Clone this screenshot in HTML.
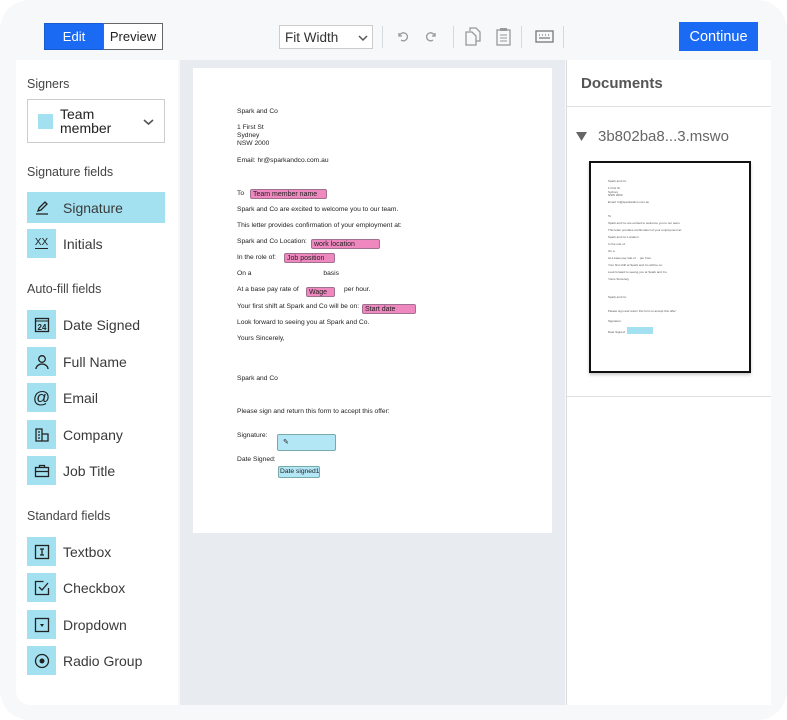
<!DOCTYPE html>
<html><head><style>
*{box-sizing:border-box;margin:0;padding:0}
body{width:787px;height:720px;background:#fff;font-family:"Liberation Sans",sans-serif;position:relative;overflow:hidden}
.card{position:absolute;left:0;top:0;width:787px;height:720px;background:#f7f8fa;border-radius:30px}
.abs{position:absolute}
.btn{position:absolute;font-size:13px;display:flex;align-items:center;justify-content:center}
.vd{position:absolute;top:26px;width:1px;height:22px;background:#d5d8dc}
.left{position:absolute;left:16px;top:60px;width:162px;height:645px;background:#fff;border-bottom-left-radius:14px}
.lab{position:absolute;left:27px;font-size:12.5px;color:#444}
.row{position:absolute;left:27px;height:29px;display:flex;align-items:center;font-size:14px;color:#3a3a3a}
.ic{width:29px;height:29px;background:#a3e1f1;display:flex;align-items:center;justify-content:center;margin-right:7px}
.center{position:absolute;left:180px;top:60px;width:385px;height:645px;background:#e8ebef}
.page{position:absolute;left:193px;top:68px;width:359px;height:465px;background:#fff}
.t{position:absolute;left:237px;font-size:6.7px;color:#222;white-space:nowrap}
.f{position:absolute;height:10px;background:#f088c0;border:1px solid #a07090;border-radius:2px;font-size:7px;color:#222;line-height:9px;padding-left:2px;white-space:nowrap;overflow:hidden}
.right{position:absolute;left:566px;top:60px;width:205px;height:645px;background:#fff;border-left:1px solid #ddd}
.th{position:absolute;font-size:3px;color:#555;white-space:nowrap}
</style></head><body>
<div class="card"></div>
<div class="btn" style="left:44px;top:23px;width:60px;height:27px;background:#1a6af3;color:#fff;border:1px solid #1a5ad0">Edit</div>
<div class="btn" style="left:103px;top:23px;width:60px;height:27px;background:#fff;color:#222;border:1px solid #666">Preview</div>
<div class="btn" style="left:279px;top:25px;width:94px;height:24px;background:#fff;border:1px solid #ccc;justify-content:flex-start;padding-left:5px;font-size:13.5px;color:#333">Fit Width<svg class="abs" style="left:78px;top:8px" width="10" height="8" viewBox="0 0 10 8"><path d="M1 2l4 4 4-4" stroke="#555" stroke-width="1.5" fill="none"/></svg></div>
<div class="vd" style="left:382px"></div><div class="vd" style="left:453px"></div><div class="vd" style="left:521px"></div><div class="vd" style="left:563px"></div>
<svg class="abs" style="left:396px;top:30px" width="12" height="12" viewBox="0 0 12 12"><path d="M3 3v3h3M3.5 6A4 4 0 1 1 5 10" stroke="#999" stroke-width="1.3" fill="none"/></svg>
<svg class="abs" style="left:426px;top:30px" width="12" height="12" viewBox="0 0 12 12"><path d="M9 3v3H6M8.5 6A4 4 0 1 0 7 10" stroke="#999" stroke-width="1.3" fill="none"/></svg>
<svg class="abs" style="left:465px;top:27px" width="16" height="19" viewBox="0 0 16 19"><path d="M5 4V1h6l4 4v9h-4M1 5h6l4 4v9H1z" stroke="#999" stroke-width="1.3" fill="none"/></svg>
<svg class="abs" style="left:496px;top:27px" width="15" height="19" viewBox="0 0 15 19"><rect x="1" y="3" width="13" height="15" stroke="#999" stroke-width="1.3" fill="none"/><rect x="4" y="1" width="7" height="3" fill="#999"/><path d="M4 8h7M4 11h7M4 14h7" stroke="#999"/></svg>
<svg class="abs" style="left:535px;top:30px" width="19" height="13" viewBox="0 0 19 13"><rect x="1" y="1" width="17" height="11" stroke="#777" stroke-width="1.3" fill="none"/><path d="M4 5h1M7 5h1M10 5h1M13 5h1M4 8h11" stroke="#777" stroke-width="1.3"/></svg>
<div class="btn" style="left:679px;top:22px;width:79px;height:29px;background:#1a6af3;color:#fff;font-size:14.5px">Continue</div>

<div class="left"></div>
<div class="lab" style="top:77px">Signers</div>
<div class="abs" style="left:27px;top:99px;width:138px;height:44px;border:1px solid #ccc;background:#fff"></div>
<div class="abs" style="left:38px;top:114px;width:15px;height:15px;background:#a3e1f1"></div>
<div class="abs" style="left:60px;top:107px;font-size:14px;line-height:14px;color:#222">Team<br>member</div>
<svg class="abs" style="left:143px;top:118px" width="11" height="8" viewBox="0 0 11 8"><path d="M1 2l4.5 4 4.5-4" stroke="#555" stroke-width="1.6" fill="none"/></svg>
<div class="lab" style="top:165px">Signature fields</div>
<div class="row" style="top:192px;width:138px;height:31px;background:#a3e1f1"><div class="ic"><svg width="16" height="16" viewBox="0 0 16 16"><path d="M4 11l1-3 6-6 2 2-6 6zM2 14h12" stroke="#222" stroke-width="1.3" fill="none"/></svg></div>Signature</div>
<div class="row" style="top:229px"><div class="ic"><span style="font-size:10px;color:#222;border-bottom:1.3px solid #222;line-height:10px">XX</span></div>Initials</div>
<div class="lab" style="top:282px">Auto-fill fields</div>
<div class="row" style="top:310px"><div class="ic"><svg width="16" height="16" viewBox="0 0 16 16"><rect x="1.5" y="1.5" width="13" height="13" stroke="#222" stroke-width="1.3" fill="none"/><path d="M1.5 4h13" stroke="#222"/><text x="8" y="13" font-size="8" font-weight="bold" text-anchor="middle" fill="#222" font-family="Liberation Sans">24</text></svg></div>Date Signed</div>
<div class="row" style="top:347px"><div class="ic"><svg width="16" height="16" viewBox="0 0 16 16"><circle cx="8" cy="5" r="3.3" stroke="#222" stroke-width="1.3" fill="none"/><path d="M2 15a6 5 0 0 1 12 0" stroke="#222" stroke-width="1.3" fill="none"/></svg></div>Full Name</div>
<div class="row" style="top:383px"><div class="ic"><span style="font-size:17px;color:#222">@</span></div>Email</div>
<div class="row" style="top:420px"><div class="ic"><svg width="16" height="16" viewBox="0 0 16 16"><path d="M2 2h6v12H2zM8 7h6v7H8M4 5h2M4 8h2M4 11h2" stroke="#222" stroke-width="1.3" fill="none"/></svg></div>Company</div>
<div class="row" style="top:456px"><div class="ic"><svg width="16" height="16" viewBox="0 0 16 16"><rect x="1.5" y="4.5" width="13" height="9" stroke="#222" stroke-width="1.3" fill="none"/><path d="M5.5 4.5v-2h5v2M1.5 8.5h13" stroke="#222" stroke-width="1.3" fill="none"/></svg></div>Job Title</div>
<div class="lab" style="top:509px">Standard fields</div>
<div class="row" style="top:537px"><div class="ic"><svg width="16" height="16" viewBox="0 0 16 16"><rect x="1.5" y="1.5" width="13" height="13" stroke="#222" stroke-width="1.3" fill="none"/><path d="M6 5h4M6 11h4M8 5v6" stroke="#222" stroke-width="1.3"/></svg></div>Textbox</div>
<div class="row" style="top:573px"><div class="ic"><svg width="16" height="16" viewBox="0 0 16 16"><path d="M14.5 8v6.5h-13v-13h8" stroke="#222" stroke-width="1.3" fill="none"/><path d="M5 7l3 3 6-7" stroke="#222" stroke-width="1.3" fill="none"/></svg></div>Checkbox</div>
<div class="row" style="top:610px"><div class="ic"><svg width="16" height="16" viewBox="0 0 16 16"><rect x="1.5" y="1.5" width="13" height="13" stroke="#222" stroke-width="1.3" fill="none"/><path d="M6 7h4l-2 3z" fill="#222"/></svg></div>Dropdown</div>
<div class="row" style="top:646px"><div class="ic"><svg width="16" height="16" viewBox="0 0 16 16"><circle cx="8" cy="8" r="6.5" stroke="#222" stroke-width="1.3" fill="none"/><circle cx="8" cy="8" r="2.5" fill="#222"/></svg></div>Radio Group</div>

<div class="center"></div>
<div class="page"></div>
<div class="t" style="top:108px">Spark and Co</div>
<div class="t" style="top:124px;line-height:8px">1 First St<br>Sydney<br>NSW 2000</div>
<div class="t" style="top:157px">Email: hr@sparkandco.com.au</div>
<div class="t" style="top:190px">To</div>
<div class="f" style="left:250px;top:189px;width:77px">Team member name</div>
<div class="t" style="top:206px">Spark and Co are excited to welcome you to our team.</div>
<div class="t" style="top:222px">This letter provides confirmation of your employment at:</div>
<div class="t" style="top:238px">Spark and Co Location:</div>
<div class="f" style="left:311px;top:239px;width:69px">work location</div>
<div class="t" style="top:254px">In the role of:</div>
<div class="f" style="left:284px;top:253px;width:51px">Job position</div>
<div class="t" style="top:270px">On a <span style="margin-left:70px">basis</span></div>
<div class="t" style="top:286px">At a base pay rate of</div>
<div class="f" style="left:306px;top:287px;width:29px">Wage</div>
<div class="t" style="left:344px;top:286px">per hour.</div>
<div class="t" style="top:303px">Your first shift at Spark and Co will be on:</div>
<div class="f" style="left:362px;top:304px;width:54px">Start date</div>
<div class="t" style="top:319px">Look forward to seeing you at Spark and Co.</div>
<div class="t" style="top:335px">Yours Sincerely,</div>
<div class="t" style="top:375px">Spark and Co</div>
<div class="t" style="top:408px">Please sign and return this form to accept this offer:</div>
<div class="t" style="top:432px">Signature:</div>
<div class="f" style="left:277px;top:434px;width:59px;height:17px;background:#b3e7f5;border-color:#7aa;padding:3px 0 0 5px">&#9998;</div>
<div class="t" style="top:456px">Date Signed:</div>
<div class="f" style="left:278px;top:466px;width:42px;height:12px;background:#b3e7f5;border-color:#7aa;line-height:10px;font-size:6.7px;padding-left:1px">Date signed1</div>

<div class="right"></div>
<div class="abs" style="left:581px;top:75px;font-size:15px;font-weight:bold;color:#555">Documents</div>
<div class="abs" style="left:566px;top:106px;width:205px;height:1px;background:#e0e0e0"></div>
<svg class="abs" style="left:576px;top:132px" width="11" height="9" viewBox="0 0 11 9"><path d="M0 0h11L5.5 9z" fill="#666"/></svg>
<div class="abs" style="left:598px;top:128px;font-size:15px;color:#666">3b802ba8...3.mswo</div>
<div class="abs" style="left:589px;top:161px;width:162px;height:212px;border:2px solid #111;background:#fff;box-shadow:0 2px 3px rgba(0,0,0,.2)"></div>
<div class="th" style="left:608px;top:180px;line-height:3.5px">Spark and Co<br><br>1 First St<br>Sydney<br>NSW 2000<br><br>Email: hr@sparkandco.com.au<br><br><br><br>To<br><br>Spark and Co are excited to welcome you to our team.<br><br>This letter provides confirmation of your employment at:<br><br>Spark and Co Location:<br><br>In the role of:<br><br>On a<br><br>At a base pay rate of &nbsp; &nbsp; per hour.<br><br>Your first shift at Spark and Co will be on:<br><br>Look forward to seeing you at Spark and Co.<br><br>Yours Sincerely,<br><br><br><br><br>Spark and Co<br><br><br><br>Please sign and return this form to accept this offer:<br><br><br>Signature:<br><br><br>Date Signed:</div>
<div class="abs" style="left:627px;top:327px;width:26px;height:7px;background:#a3e1f1"></div>
<div class="abs" style="left:566px;top:396px;width:205px;height:1px;background:#e0e0e0"></div>
</body></html>
